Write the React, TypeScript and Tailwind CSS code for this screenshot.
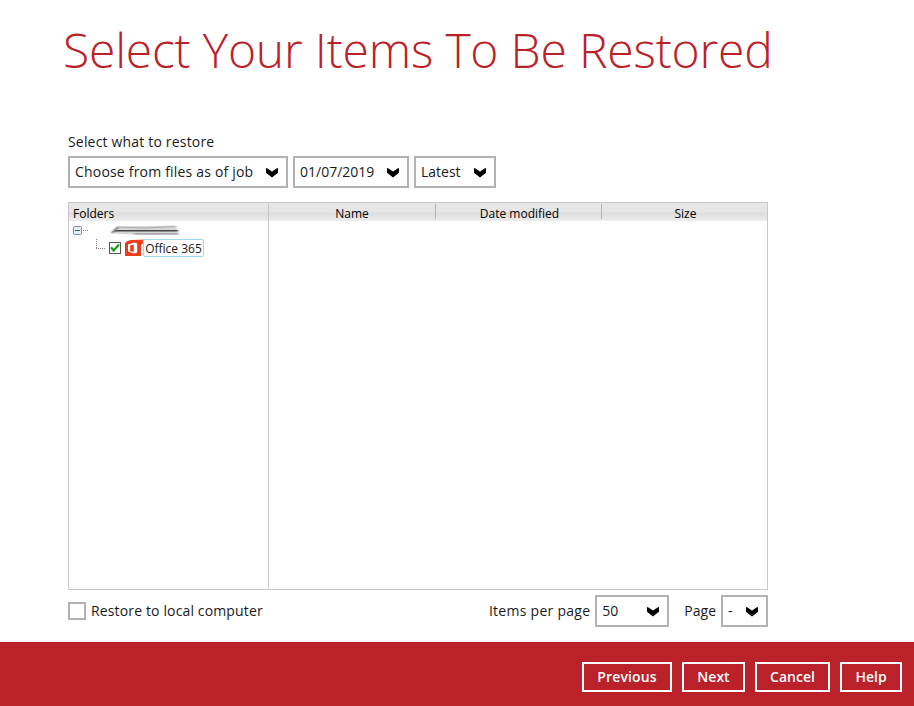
import React from 'react';

interface SelectBoxProps {
  value: string;
  className: string;
}

const Chevron = () => (
  <svg width="12" height="10" viewBox="0 0 12 10" className="shrink-0">
    <path d="M0 0 L1.5 0.4 L6 3.6 L10.5 0.4 L12 0 V4.8 L6 9.6 L0 4.8 Z" fill="#000" />
  </svg>
);

const SelectBox = ({ value, className }: SelectBoxProps) => {
  return (
    <button
      type="button"
      className={`flex h-8 items-center justify-between border-2 border-[#b2b2b2] bg-white pl-[5px] ${className}`}
    >
      <span className="whitespace-nowrap pb-[2px]">{value}</span>
      <span className="flex pt-[2px]">
        <Chevron />
      </span>
    </button>
  );
};

const OfficeIcon = () => (
  <svg width="36" height="18" viewBox="0 0 36 18" className="shrink-0">
    <defs>
      <linearGradient id="smear" x1="0" y1="0" x2="1" y2="0">
        <stop offset="0.45" stopColor="#eb3c1e" />
        <stop offset="0.9" stopColor="#eb3c1e" stopOpacity="0" />
      </linearGradient>
    </defs>
    <path d="M0 4 Q2 1.5 6 1 L36 0 L19 3.5 L16 6 V17 H0 Z" fill="url(#smear)" />
    <path
      d="M3 5.6 L9 3.6 L12.2 4.6 V13.4 L9 14.4 L3 12.4 Z M5.2 6.6 V11.4 L3.6 12.1 L8.8 12.7 V5.6 Z"
      fill="#fff"
      fillRule="evenodd"
    />
  </svg>
);

// Blurred out account name
const Redacted = () => (
  <svg width="72" height="14" viewBox="0 0 72 14">
    <defs>
      <filter id="soft" x="-10%" y="-30%" width="120%" height="160%">
        <feGaussianBlur stdDeviation="1 0.5" />
      </filter>
    </defs>
    <g filter="url(#soft)">
      <path d="M8 2.5 L66 1.5 L69 10.5 L30 11 L2 9.5 Z" fill="#d6d6d6" />
      <path d="M8 3 L34 4 L66 2.5" stroke="#aaa" strokeWidth="1.2" fill="none" />
      <path d="M4 6.8 H68" stroke="#444" strokeWidth="1.4" />
      <path d="M24 9.8 L68 9.8" stroke="#999" strokeWidth="1.2" />
      <path d="M8 3 L2 9" stroke="#777" strokeWidth="1.8" />
    </g>
  </svg>
);

const FolderTree = () => {
  return (
    <div className="w-[200px] border-r border-[#c8c8c8] text-[12px]">
      <div className="flex h-[18px] items-center pl-1">
        <svg width="16" height="9" viewBox="0 0 16 9">
          <rect x="0.5" y="0.5" width="8" height="8" rx="1" fill="#e6edf5" stroke="#7f8c9a" />
          <path d="M2 4.5 H7" stroke="#2f5fa8" />
          <path d="M10 4.5 H16" stroke="#808080" strokeDasharray="1 1" />
        </svg>
        <div className="ml-[21px] pt-0.5">
          <Redacted />
        </div>
      </div>
      <div className="flex h-[18px] items-center pl-[27px]">
        <svg width="13" height="18" viewBox="0 0 13 18" className="shrink-0">
          <path d="M0.5 0 V9" stroke="#808080" strokeDasharray="1 1" />
          <path d="M0 9.5 H10" stroke="#808080" strokeDasharray="1 1" />
        </svg>
        <svg width="12" height="12" viewBox="0 0 12 12" className="shrink-0">
          <rect x="0.5" y="0.5" width="11" height="11" fill="#fff" stroke="#555" />
          <path d="M2 5.2 L4.6 8.5 L10 2.5" stroke="#16a016" strokeWidth="2.2" fill="none" />
        </svg>
        <div className="-mr-[18px] ml-1 flex">
          <OfficeIcon />
        </div>
        <span className="relative flex h-[18px] w-[61px] items-center justify-center whitespace-nowrap rounded-[2px] border border-[#99d9f9] bg-white pt-[2px]">
          Office 365
        </span>
      </div>
    </div>
  );
};

const buttons = [
  { label: 'Previous', className: 'w-[90px] tracking-[0.15px]' },
  { label: 'Next', className: 'w-[63px]' },
  { label: 'Cancel', className: 'w-[75px]' },
  { label: 'Help', className: 'w-[62px]' },
];

const App = () => {
  return (
    <div className="flex h-[706px] w-[914px] flex-col overflow-hidden bg-white font-['Open_Sans','Noto_Sans',sans-serif] text-[14px] text-[#1a1a1a]">
      <main className="flex-1 pl-[68px]">
        <h1 className="-ml-[5px] h-[130px] whitespace-nowrap pt-[17px] text-[48px] font-light leading-[65px] tracking-[-0.19px] text-[#bb2129]">
          Select Your Items To Be Restored
        </h1>
        <div className="h-[26px] leading-[24px] tracking-[0.18px]">Select what to restore</div>
        <div className="flex gap-[5px]">
          <SelectBox value="Choose from files as of job" className="w-[220px] pr-2 tracking-[0.19px]" />
          <SelectBox value="01/07/2019" className="w-[116px] pr-2" />
          <SelectBox value="Latest" className="w-[82px] pr-2" />
        </div>

        <div className="mt-[14px] flex h-[388px] w-[700px] flex-col border border-[#c8c8c8]">
          <div className="flex h-[18px] shrink-0 bg-linear-to-b from-[#e6e6e6] from-50% via-[#dcdcdc] via-55% to-[#ededed] text-[12px] leading-[21px] text-black">
            <div className="w-[200px] border-r border-[#c8c8c8] pl-1">Folders</div>
            <div className="w-[166px] text-center">Name</div>
            <div className="h-[15px] w-px translate-y-px bg-[#b2b2b2]" />
            <div className="w-[165px] pl-0.5 text-center">Date modified</div>
            <div className="h-[15px] w-px translate-y-px bg-[#b2b2b2]" />
            <div className="flex-1 pl-0.5 text-center">Size</div>
          </div>
          <div className="flex flex-1">
            <FolderTree />
          </div>
        </div>

        <div className="mt-[5px] flex h-8 w-[700px] items-center">
          <span className="mr-[5px] h-[18px] w-[18px] border-2 border-[#b2b2b2]" />
          <span className="pb-[2px] tracking-[0.14px]">Restore to local computer</span>
          <span className="ml-auto mr-[5px] pb-[2px] tracking-[0.27px]">Items per page</span>
          <SelectBox value="50" className="w-[74px] pr-2" />
          <span className="ml-[15px] mr-[5px] pb-[2px]">Page</span>
          <SelectBox value="-" className="w-[47px] pr-2" />
        </div>
      </main>

      <footer className="flex h-16 justify-end gap-2.5 bg-[#bb2129] pr-3 pt-5">
        {buttons.map((button) => (
          <button
            key={button.label}
            type="button"
            className={`h-[30px] border-2 border-white text-[14px] font-semibold leading-[26px] text-white ${button.className}`}
          >
            {button.label}
          </button>
        ))}
      </footer>
    </div>
  );
};

export default App;
